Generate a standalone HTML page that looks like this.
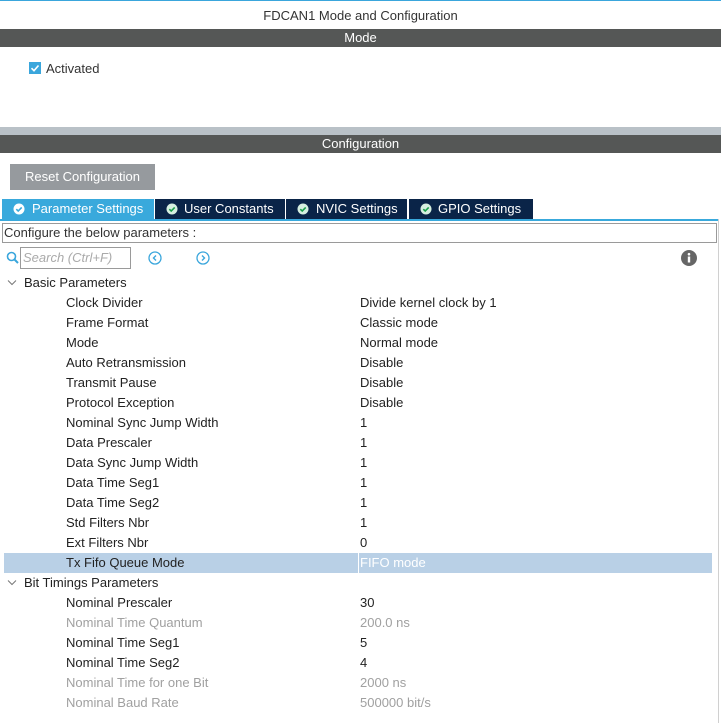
<!DOCTYPE html>
<html><head><meta charset="utf-8"><style>
*{margin:0;padding:0;box-sizing:border-box}
body{width:721px;height:723px;background:#fff;font-family:"Liberation Sans",Arial,sans-serif;font-size:13px;color:#222;position:relative;overflow:hidden}
.a{position:absolute}
.bar{position:absolute;left:0;width:721px;height:18px;background:#555756;color:#fff;text-align:center;line-height:18px}
.tab{position:absolute;top:199px;height:20px;background:#0a2448;color:#fff;line-height:20px;font-size:13px;padding-left:30px}
.tab svg{position:absolute;left:11px;top:4px}
.row{position:absolute;left:0;width:712px;height:20px;line-height:20px}
.row .k{position:absolute;left:66px}
.row .v{position:absolute;left:360px}
.g{color:#a0a0a0}
.h .k{left:24px}
.chev{position:absolute;left:7px;top:6px}
</style></head><body>
<div class="a" style="left:0;top:0;width:721px;height:1px;background:#3aa6dc"></div>
<div class="a" style="left:0;top:8px;width:721px;text-align:center;color:#333">FDCAN1 Mode and Configuration</div>
<div class="bar" style="top:29px">Mode</div>
<div class="a" style="left:29px;top:62px;width:12px;height:12px;background:#3aa6dc"><svg width="12" height="12"><path d="M2.5 6.2L5 8.7L9.5 3.5" stroke="#fff" stroke-width="1.6" fill="none"/></svg></div>
<div class="a" style="left:46px;top:61px;color:#333">Activated</div>
<div class="a" style="left:0;top:127px;width:721px;height:8px;background:#b9c1c7"></div>
<div class="bar" style="top:135px">Configuration</div>
<div class="a" style="left:10px;top:164px;width:145px;height:26px;background:#969a9e;color:#fff;text-align:center;line-height:26px">Reset Configuration</div>
<div class="tab" style="left:2px;width:152px;background:#39a9dc">
<svg width="12" height="12"><circle cx="6" cy="6" r="5.5" fill="#fff"/><path d="M3.3 6.2L5.2 8L8.7 4.4" stroke="#39a9dc" stroke-width="1.6" fill="none"/></svg>Parameter Settings</div>
<div class="tab" style="left:155px;width:130px;padding-left:29px"><svg width="12" height="12"><circle cx="6" cy="6" r="5.5" fill="#d6efe0"/><path d="M3.3 6.2L5.2 8L8.7 4.4" stroke="#1aa04a" stroke-width="1.6" fill="none"/></svg>User Constants</div>
<div class="tab" style="left:286px;width:121px"><svg width="12" height="12"><circle cx="6" cy="6" r="5.5" fill="#d6efe0"/><path d="M3.3 6.2L5.2 8L8.7 4.4" stroke="#1aa04a" stroke-width="1.6" fill="none"/></svg>NVIC Settings</div>
<div class="tab" style="left:409px;width:124px;padding-left:29px"><svg width="12" height="12"><circle cx="6" cy="6" r="5.5" fill="#d6efe0"/><path d="M3.3 6.2L5.2 8L8.7 4.4" stroke="#1aa04a" stroke-width="1.6" fill="none"/></svg>GPIO Settings</div>
<div class="a" style="left:0;top:219px;width:718px;height:2px;background:#39a9dc"></div>
<div class="a" style="left:2px;top:223px;width:715px;height:20px;border:1px solid #9a9a9a;line-height:18px;padding-left:1px;color:#333">Configure the below parameters :</div>
<div class="a" style="left:718px;top:219px;width:1px;height:504px;background:#d0d0d0"></div>
<svg class="a" style="left:6px;top:251px" width="14" height="14"><circle cx="5.5" cy="5.5" r="4" stroke="#3aa6dc" stroke-width="1.6" fill="none"/><path d="M8.5 8.5L12 12" stroke="#3aa6dc" stroke-width="2"/></svg>
<div class="a" style="left:20px;top:247px;width:111px;height:22px;border:1px solid #9a9a9a;color:#aaa;font-style:italic;line-height:20px;padding-left:2px">Search (Ctrl+F)</div>
<svg class="a" style="left:148px;top:251px" width="14" height="14"><circle cx="7" cy="7" r="6" stroke="#3aa6dc" stroke-width="1.3" fill="none"/><path d="M8 4.5L5.5 7L8 9.5" stroke="#3aa6dc" stroke-width="1.4" fill="none"/></svg>
<svg class="a" style="left:196px;top:251px" width="14" height="14"><circle cx="7" cy="7" r="6" stroke="#3aa6dc" stroke-width="1.3" fill="none"/><path d="M6 4.5L8.5 7L6 9.5" stroke="#3aa6dc" stroke-width="1.4" fill="none"/></svg>
<svg class="a" style="left:681px;top:250px" width="16" height="16"><circle cx="8" cy="8" r="8" fill="#666"/><rect x="6.8" y="6.5" width="2.4" height="6" fill="#fff"/><circle cx="8" cy="4.2" r="1.3" fill="#fff"/></svg>

<div class="row h" style="top:273px"><svg class="chev" width="10" height="8"><path d="M1 1.5L5 5.5L9 1.5" stroke="#777" fill="none"/></svg><span class="k">Basic Parameters</span></div>
<div class="row" style="top:293px"><span class="k">Clock Divider</span><span class="v">Divide kernel clock by 1</span></div>
<div class="row" style="top:313px"><span class="k">Frame Format</span><span class="v">Classic mode</span></div>
<div class="row" style="top:333px"><span class="k">Mode</span><span class="v">Normal mode</span></div>
<div class="row" style="top:353px"><span class="k">Auto Retransmission</span><span class="v">Disable</span></div>
<div class="row" style="top:373px"><span class="k">Transmit Pause</span><span class="v">Disable</span></div>
<div class="row" style="top:393px"><span class="k">Protocol Exception</span><span class="v">Disable</span></div>
<div class="row" style="top:413px"><span class="k">Nominal Sync Jump Width</span><span class="v">1</span></div>
<div class="row" style="top:433px"><span class="k">Data Prescaler</span><span class="v">1</span></div>
<div class="row" style="top:453px"><span class="k">Data Sync Jump Width</span><span class="v">1</span></div>
<div class="row" style="top:473px"><span class="k">Data Time Seg1</span><span class="v">1</span></div>
<div class="row" style="top:493px"><span class="k">Data Time Seg2</span><span class="v">1</span></div>
<div class="row" style="top:513px"><span class="k">Std Filters Nbr</span><span class="v">1</span></div>
<div class="row" style="top:533px"><span class="k">Ext Filters Nbr</span><span class="v">0</span></div>
<div class="row" style="top:553px;left:4px;width:708px;background:#b9d0e6"><span class="k" style="left:62px">Tx Fifo Queue Mode</span><span style="position:absolute;left:354px;top:0;width:1px;height:20px;background:#fff"></span><span class="v" style="left:356px;color:#fff">FIFO mode</span></div>
<div class="row h" style="top:573px"><svg class="chev" width="10" height="8"><path d="M1 1.5L5 5.5L9 1.5" stroke="#777" fill="none"/></svg><span class="k">Bit Timings Parameters</span></div>
<div class="row" style="top:593px"><span class="k">Nominal Prescaler</span><span class="v">30</span></div>
<div class="row g" style="top:613px"><span class="k">Nominal Time Quantum</span><span class="v">200.0 ns</span></div>
<div class="row" style="top:633px"><span class="k">Nominal Time Seg1</span><span class="v">5</span></div>
<div class="row" style="top:653px"><span class="k">Nominal Time Seg2</span><span class="v">4</span></div>
<div class="row g" style="top:673px"><span class="k">Nominal Time for one Bit</span><span class="v">2000 ns</span></div>
<div class="row g" style="top:693px"><span class="k">Nominal Baud Rate</span><span class="v">500000 bit/s</span></div>
</body></html>
